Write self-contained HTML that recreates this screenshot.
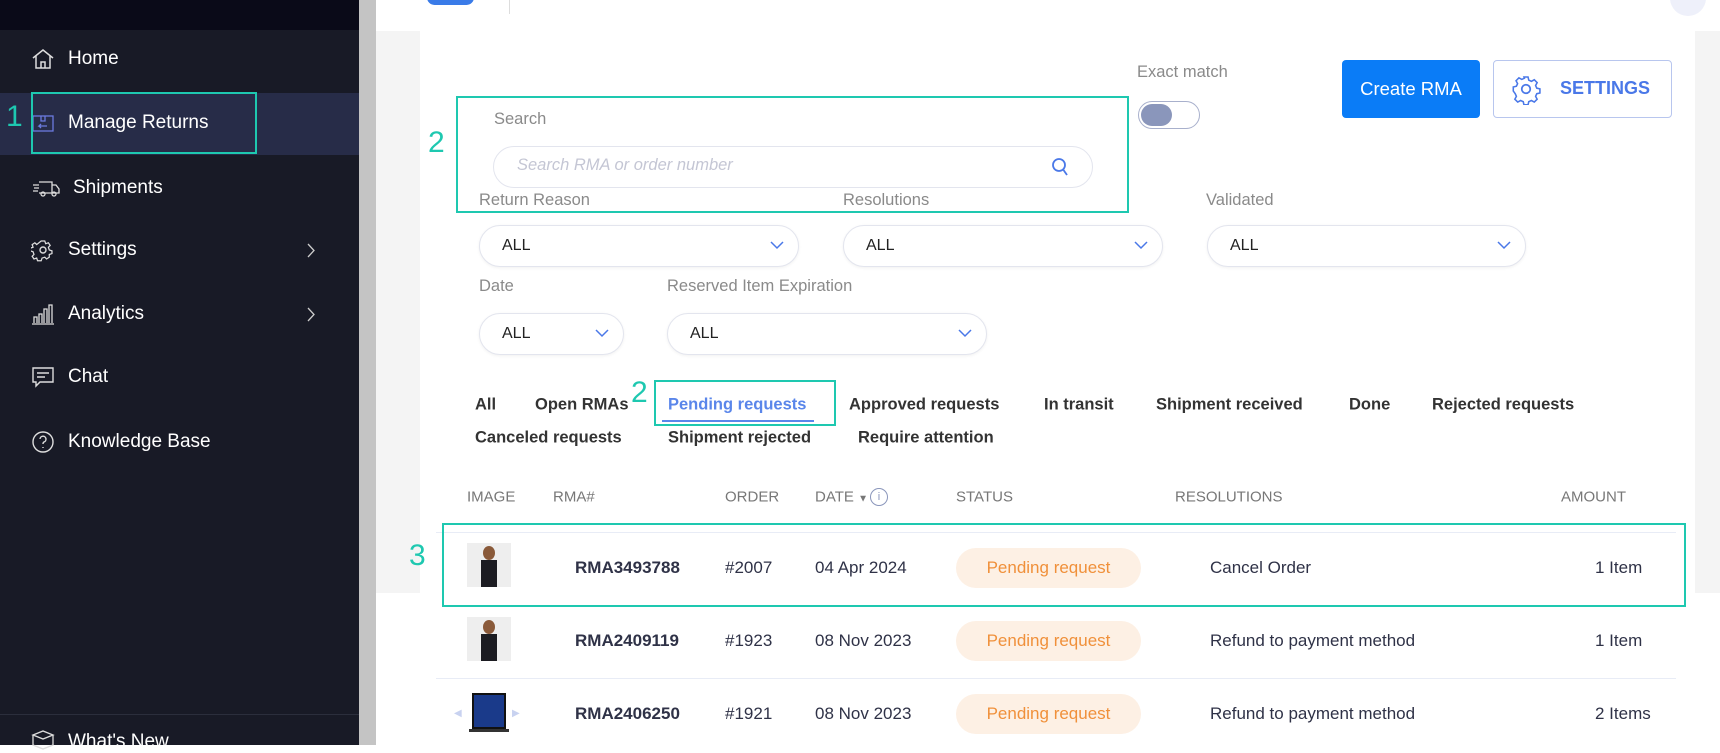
<!DOCTYPE html>
<html><head><meta charset="utf-8"><style>
*{box-sizing:border-box;margin:0;padding:0}
body{width:1720px;height:745px;overflow:hidden;position:relative;background:#fff;font-family:"Liberation Sans",sans-serif;}
.a{position:absolute;white-space:nowrap}
#side{position:absolute;left:0;top:0;width:359px;height:745px;background:#181a26}
.sitem{position:absolute;left:68px;color:#fff;font-size:19px;transform:translateY(-50%)}
.ico{position:absolute;left:31px;width:24px;height:24px;transform:translateY(-50%)}
.lbl{color:#8a8a8a;font-size:16.5px}
.sel{position:absolute;height:42px;border:1px solid #e3e5ee;border-radius:21px;background:#fff;box-shadow:0 1px 3px rgba(0,0,0,.06)}
.sel span{position:absolute;left:22px;top:11px;font-size:16px;color:#222}
.sel svg{position:absolute;right:14px;top:15px}
.tab{font-size:16.5px;color:#333;font-weight:bold;transform:translateY(-50%)}
.th{font-size:15px;color:#777;transform:translateY(-50%)}
.td{font-size:17px;color:#2f3247;transform:translateY(-50%)}
.pill{position:absolute;left:956px;width:185px;height:40px;border-radius:20px;background:#fdf0e4;color:#f0903a;font-size:17px;text-align:center;line-height:40px;transform:translateY(-50%)}
.teal{position:absolute;border:2px solid #1ec8b0}
.num{color:#1ec8b0;font-size:30px;transform:translateY(-50%)}
.thumb{position:absolute;left:467px;width:44px;height:44px;background:#eeeeee}
</style></head><body>
<div id="side">
 <div class="a" style="left:0;top:0;width:359px;height:30px;background:#0a0a18"></div>
 <div class="a" style="left:0;top:93px;width:359px;height:62px;background:#272c48"></div>
 <svg class="ico" style="top:59px" viewBox="0 0 24 24" fill="none" stroke="#ddd" stroke-width="1.5"><path d="M2 11L12 3l10 8M5 9v12h14V9M10 21v-6h4v6"/></svg>
 <div class="sitem" style="top:59px">Home</div>
 <svg class="ico" style="top:123px" viewBox="0 0 24 24" fill="none" stroke="#6b7be0" stroke-width="1.3"><rect x="2" y="5" width="20" height="15"/><path d="M10 5v5h4V5M16 15H8l2-2M8 15l2 2"/></svg>
 <div class="sitem" style="top:123px">Manage Returns</div>
 <svg class="ico" style="top:188px;width:30px" viewBox="0 0 30 24" fill="none" stroke="#ddd" stroke-width="1.3"><path d="M8 6h13v11H8M21 9h4l3 4v4h-7M2 9h6M3 12h5M2 15h5"/><circle cx="12" cy="18" r="2"/><circle cx="23" cy="18" r="2"/></svg>
 <div class="sitem" style="top:188px;left:73px">Shipments</div>
 <svg class="ico" style="top:250px" viewBox="0 0 24 24" fill="none" stroke="#ddd" stroke-width="1.4"><circle cx="12" cy="12" r="3"/><path d="M10 2h4l1 3 3-1 2 3-2 2 1 3 3 1v3l-3 1 0 3-3 2-2-2-3 1-1 3h-4l-1-3-3 1-2-3 2-2-1-3-3-1v-3l3-1-1-3 3-2 2 2z" transform="scale(.9) translate(1.3 1.3)"/></svg>
 <div class="sitem" style="top:250px">Settings</div>
 <svg class="a" style="left:306px;top:243px" width="10" height="15" viewBox="0 0 10 15" fill="none" stroke="#ccc" stroke-width="1.3"><path d="M2 1l6 6.5L2 14"/></svg>
 <svg class="ico" style="top:314px" viewBox="0 0 24 24" fill="none" stroke="#ddd" stroke-width="1.3"><path d="M1 22h22M3 21v-6h3v6M8 21v-9h3v9M13 21V7h3v14M18 21V3h3v18"/></svg>
 <div class="sitem" style="top:314px">Analytics</div>
 <svg class="a" style="left:306px;top:307px" width="10" height="15" viewBox="0 0 10 15" fill="none" stroke="#ccc" stroke-width="1.3"><path d="M2 1l6 6.5L2 14"/></svg>
 <svg class="ico" style="top:377px" viewBox="0 0 24 24" fill="none" stroke="#ddd" stroke-width="1.4"><path d="M2 3h20v14H9l-4 4v-4H2zM6 8h12M6 12h8"/></svg>
 <div class="sitem" style="top:377px">Chat</div>
 <svg class="ico" style="top:442px" viewBox="0 0 24 24" fill="none" stroke="#ddd" stroke-width="1.4"><circle cx="12" cy="12" r="10"/><path d="M9 9a3 3 0 1 1 4 3c-1 .5-1 1-1 2M12 17v1"/></svg>
 <div class="sitem" style="top:442px">Knowledge Base</div>
 <div class="a" style="left:0;top:714px;width:359px;height:1px;background:#2b2e3c"></div>
 <svg class="ico" style="top:740px" viewBox="0 0 24 24" fill="none" stroke="#ddd" stroke-width="1.3"><path d="M2 7l10-4 10 4-10 4zM2 7v10l10 4 10-4V7"/></svg>
 <div class="sitem" style="top:742px">What's New</div>
</div>
<div class="a" style="left:359px;top:0;width:17px;height:745px;background:#c4c4c4"></div>
<div class="a" style="left:376px;top:0;width:1344px;height:31px;background:#fff"></div>
<div class="a" style="left:427px;top:-10px;width:47px;height:15px;border-radius:8px;background:#3a7be8"></div>
<div class="a" style="left:509px;top:0;width:1px;height:14px;background:#ddd"></div>
<div class="a" style="left:1670px;top:-20px;width:36px;height:36px;border-radius:50%;background:#eef0fa"></div>
<div class="a" style="left:376px;top:31px;width:1344px;height:562px;background:#f4f4f4"></div>
<div class="a" style="left:420px;top:31px;width:1275px;height:714px;background:#fff"></div>

<div class="a lbl" style="left:1137px;top:63px">Exact match</div>
<div class="a" style="left:1138px;top:101px;width:62px;height:28px;border:1px solid #a8b0cc;border-radius:14px;background:#fff"></div>
<div class="a" style="left:1141px;top:104px;width:31px;height:22px;border-radius:11px;background:#8a96bb"></div>
<div class="a" style="left:1342px;top:60px;width:138px;height:58px;border-radius:4px;background:#0a7cf7;color:#fff;font-size:18.5px;text-align:center;line-height:58px">Create RMA</div>
<div class="a" style="left:1493px;top:60px;width:179px;height:58px;border-radius:4px;border:1px solid #b8c6ee;background:#fff"></div>
<svg class="a" style="left:1510px;top:73px" width="32" height="32" viewBox="0 0 24 24" fill="none" stroke="#4a78e8" stroke-width="1.3"><circle cx="12" cy="12" r="3.2"/><path d="M10.3 2h3.4l.6 2.6 2.2 1 2.4-1.3 2.4 2.4-1.3 2.4 1 2.2 2.6.6v3.4l-2.6.6-1 2.2 1.3 2.4-2.4 2.4-2.4-1.3-2.2 1-.6 2.6h-3.4l-.6-2.6-2.2-1-2.4 1.3-2.4-2.4 1.3-2.4-1-2.2L1.4 13.7v-3.4l2.6-.6 1-2.2-1.3-2.4 2.4-2.4 2.4 1.3 2.2-1z" transform="translate(1.2 1.2) scale(.9)"/></svg>
<div class="a" style="left:1560px;top:78px;font-size:18px;font-weight:bold;color:#4a78e8">SETTINGS</div>

<div class="a lbl" style="left:494px;top:110px">Search</div>
<div class="a" style="left:493px;top:146px;width:600px;height:42px;border:1px solid #e3e5ee;border-radius:21px"></div>
<div class="a" style="left:517px;top:156px;font-size:16.5px;color:#c4c6d4;font-style:italic">Search RMA or order number</div>
<svg class="a" style="left:1051px;top:157px" width="18" height="20" viewBox="0 0 18 20" fill="none" stroke="#4a78e8" stroke-width="1.8"><circle cx="8" cy="8" r="6"/><path d="M12.5 13l3.5 5"/></svg>

<div class="a lbl" style="left:479px;top:191px">Return Reason</div>
<div class="a lbl" style="left:843px;top:191px">Resolutions</div>
<div class="a lbl" style="left:1206px;top:191px">Validated</div>
<div class="sel" style="left:479px;top:225px;width:320px"><span>ALL</span><svg width="14" height="9" viewBox="0 0 14 9" fill="none" stroke="#4a78e8" stroke-width="1.5"><path d="M1 1l6 6 6-6"/></svg></div>
<div class="sel" style="left:843px;top:225px;width:320px"><span>ALL</span><svg width="14" height="9" viewBox="0 0 14 9" fill="none" stroke="#4a78e8" stroke-width="1.5"><path d="M1 1l6 6 6-6"/></svg></div>
<div class="sel" style="left:1207px;top:225px;width:319px"><span>ALL</span><svg width="14" height="9" viewBox="0 0 14 9" fill="none" stroke="#4a78e8" stroke-width="1.5"><path d="M1 1l6 6 6-6"/></svg></div>
<div class="a lbl" style="left:479px;top:277px">Date</div>
<div class="a lbl" style="left:667px;top:277px">Reserved Item Expiration</div>
<div class="sel" style="left:479px;top:313px;width:145px"><span>ALL</span><svg width="14" height="9" viewBox="0 0 14 9" fill="none" stroke="#4a78e8" stroke-width="1.5"><path d="M1 1l6 6 6-6"/></svg></div>
<div class="sel" style="left:667px;top:313px;width:320px"><span>ALL</span><svg width="14" height="9" viewBox="0 0 14 9" fill="none" stroke="#4a78e8" stroke-width="1.5"><path d="M1 1l6 6 6-6"/></svg></div>

<div class="a tab" style="left:475px;top:405px">All</div>
<div class="a tab" style="left:535px;top:405px">Open RMAs</div>
<div class="a tab" style="left:668px;top:405px;color:#5a86ea">Pending requests</div>
<div class="a" style="left:662px;top:420px;width:152px;height:2px;background:#5a86ea"></div>
<div class="a tab" style="left:849px;top:405px">Approved requests</div>
<div class="a tab" style="left:1044px;top:405px">In transit</div>
<div class="a tab" style="left:1156px;top:405px">Shipment received</div>
<div class="a tab" style="left:1349px;top:405px">Done</div>
<div class="a tab" style="left:1432px;top:405px">Rejected requests</div>
<div class="a tab" style="left:475px;top:438px">Canceled requests</div>
<div class="a tab" style="left:668px;top:438px">Shipment rejected</div>
<div class="a tab" style="left:858px;top:438px">Require attention</div>

<div class="a th" style="left:467px;top:497px">IMAGE</div>
<div class="a th" style="left:553px;top:497px">RMA#</div>
<div class="a th" style="left:725px;top:497px">ORDER</div>
<div class="a th" style="left:815px;top:497px">DATE <span style="font-size:10px">&#9660;</span></div>
<div class="a" style="left:870px;top:488px;width:18px;height:18px;border:1px solid #8a96bb;border-radius:50%;color:#8a96bb;font-size:11px;text-align:center;line-height:16px">i</div>
<div class="a th" style="left:956px;top:497px">STATUS</div>
<div class="a th" style="left:1175px;top:497px">RESOLUTIONS</div>
<div class="a th" style="left:1561px;top:497px">AMOUNT</div>

<div class="a" style="left:436px;top:532px;width:1240px;height:1px;background:#e8ecf6"></div>
<div class="a" style="left:436px;top:678px;width:1240px;height:1px;background:#e8ecf6"></div>

<div class="thumb" style="top:543px"><svg width="44" height="44"><ellipse cx="22" cy="10" rx="6" ry="7" fill="#8a5a3a"/><rect x="14" y="17" width="16" height="27" fill="#1c1c22"/></svg></div>
<div class="a td" style="left:575px;top:568px;font-weight:bold">RMA3493788</div>
<div class="a td" style="left:725px;top:568px">#2007</div>
<div class="a td" style="left:815px;top:568px">04 Apr 2024</div>
<div class="pill" style="top:568px">Pending request</div>
<div class="a td" style="left:1210px;top:568px">Cancel Order</div>
<div class="a td" style="left:1595px;top:568px">1 Item</div>

<div class="thumb" style="top:617px"><svg width="44" height="44"><ellipse cx="22" cy="10" rx="6" ry="7" fill="#8a5a3a"/><rect x="14" y="17" width="16" height="27" fill="#1c1c22"/></svg></div>
<div class="a td" style="left:575px;top:641px;font-weight:bold">RMA2409119</div>
<div class="a td" style="left:725px;top:641px">#1923</div>
<div class="a td" style="left:815px;top:641px">08 Nov 2023</div>
<div class="pill" style="top:641px">Pending request</div>
<div class="a td" style="left:1210px;top:641px">Refund to payment method</div>
<div class="a td" style="left:1595px;top:641px">1 Item</div>

<div class="a" style="left:454px;top:708px;color:#c8d2f0;font-size:10px">&#9664;</div>
<div class="a" style="left:512px;top:708px;color:#c8d2f0;font-size:10px">&#9654;</div>
<div class="a" style="left:472px;top:693px;width:34px;height:36px;background:#1a3a8a;border:2px solid #111"></div>
<div class="a" style="left:469px;top:729px;width:40px;height:3px;background:#333"></div>
<div class="a td" style="left:575px;top:714px;font-weight:bold">RMA2406250</div>
<div class="a td" style="left:725px;top:714px">#1921</div>
<div class="a td" style="left:815px;top:714px">08 Nov 2023</div>
<div class="pill" style="top:714px">Pending request</div>
<div class="a td" style="left:1210px;top:714px">Refund to payment method</div>
<div class="a td" style="left:1595px;top:714px">2 Items</div>

<div class="teal" style="left:31px;top:92px;width:226px;height:62px"></div>
<div class="a num" style="left:6px;top:117px">1</div>
<div class="teal" style="left:456px;top:96px;width:673px;height:117px"></div>
<div class="a num" style="left:428px;top:143px">2</div>
<div class="teal" style="left:654px;top:380px;width:182px;height:46px"></div>
<div class="a num" style="left:631px;top:393px">2</div>
<div class="teal" style="left:442px;top:523px;width:1244px;height:84px"></div>
<div class="a num" style="left:409px;top:556px">3</div>
</body></html>
